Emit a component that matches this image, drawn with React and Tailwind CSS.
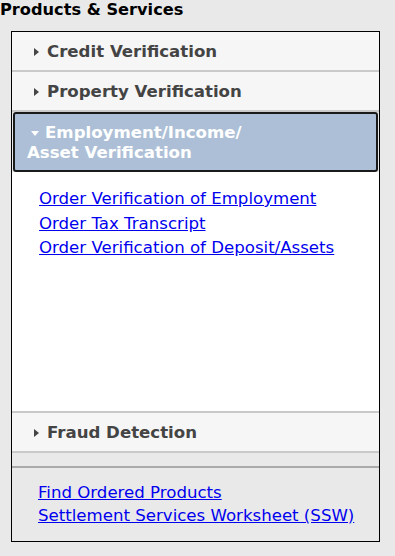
export default function App() {
  const font = { fontFamily: '"DejaVu Sans", Verdana, sans-serif' };
  const Tri = ({ down, color }) =>
    down ? (
      <span className={`inline-block w-0 h-0 border-l-[4px] border-r-[4px] border-t-[5px] border-l-transparent border-r-transparent ${color}`} />
    ) : (
      <span className={`inline-block w-0 h-0 border-t-[4px] border-b-[4px] border-l-[5px] border-t-transparent border-b-transparent ${color}`} />
    );

  const Header = ({ label }) => (
    <div className="h-[40px] pt-[2px] bg-[#f6f6f6] border-b-2 border-[#c9c9c9] flex items-center pl-[22px] gap-[8px]">
      <Tri color="border-l-[#444444]" />
      <span className="text-[16.6px] font-bold text-[#444444]">{label}</span>
    </div>
  );

  return (
    <div className="w-[395px] h-[556px] bg-[#e9e9e9] overflow-hidden" style={font}>
      <div className="text-[16.2px] font-bold text-black leading-[20px]">Products &amp; Services</div>
      <div className="ml-[11px] mt-[11px] w-[369px] h-[511px] border border-black bg-[#e9e9e9] flex flex-col">
        <Header label="Credit Verification" />
        <Header label="Property Verification" />
        <div className="mx-[1px] h-[60px] bg-[#adbfd6] border-2 border-[#1a1a1a] rounded-[3px] px-[12px] pt-[9px] text-white font-bold text-[16.6px] leading-[20px]">
          <div className="flex items-center gap-[6px] pl-[4px]">
            <Tri down color="border-t-white" />
            <span>Employment/Income/</span>
          </div>
          <div>Asset Verification</div>
        </div>
        <div className="bg-white h-[239px] pl-[27px] pt-[17px] flex flex-col gap-[4.5px] text-[16.6px] leading-[20px]">
          <a href="#" className="text-[#0000ee] underline w-fit">Order Verification of Employment</a>
          <a href="#" className="text-[#0000ee] underline w-fit">Order Tax Transcript</a>
          <a href="#" className="text-[#0000ee] underline w-fit">Order Verification of Deposit/Assets</a>
        </div>
        <div className="border-t-2 border-[#c9c9c9]">
          <Header label="Fraud Detection" />
        </div>
        <div className="h-[13px]" />
        <div className="border-t-2 border-[#aaaaaa] pl-[26px] pt-[15px] flex flex-col gap-[3px] text-[16.6px] leading-[20px]">
          <a href="#" className="text-[#0000ee] underline w-fit">Find Ordered Products</a>
          <a href="#" className="text-[#0000ee] underline w-fit">Settlement Services Worksheet (SSW)</a>
        </div>
      </div>
    </div>
  );
}
